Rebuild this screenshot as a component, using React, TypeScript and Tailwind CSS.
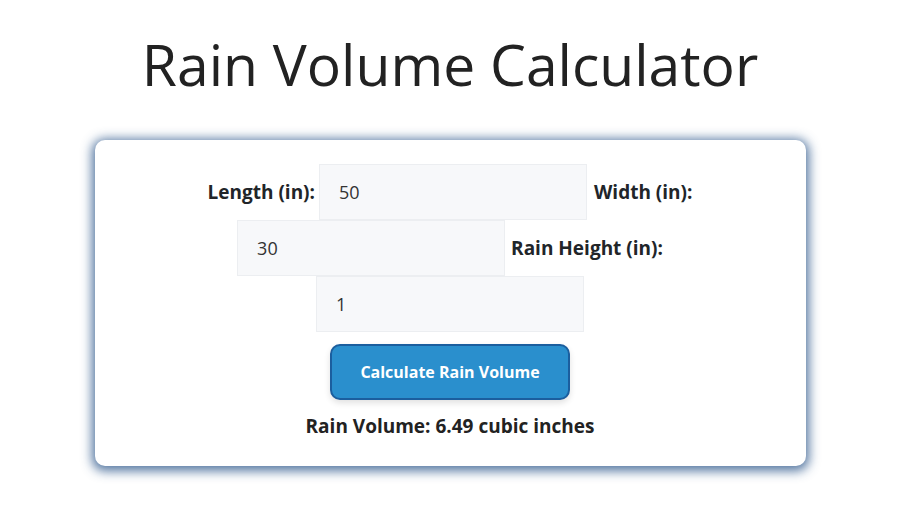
import React, { useState } from 'react';

const font = { fontFamily: '"Open Sans", "Noto Sans", sans-serif' };

const App: React.FC = () => {
  const [length, setLength] = useState('50');
  const [width, setWidth] = useState('30');
  const [height, setHeight] = useState('1');
  const [volume, setVolume] = useState('6.49');

  const calculate = () => {
    const v = (parseFloat(length) * parseFloat(width) * parseFloat(height)) / 231;
    setVolume(isNaN(v) ? '0.00' : v.toFixed(2));
  };

  const inputClass =
    'w-[268px] h-[56px] px-[19px] bg-[#f7f8fa] border border-[#eceef1] text-[18px] text-[#333] outline-none';

  return (
    <div className="min-h-screen bg-white text-[#212529] pr-[6px]" style={font}>
      <h1 className="pt-[34px] text-center text-[57px] leading-[60px] font-normal text-[#222]">
        Rain Volume Calculator
      </h1>

      {/* Calculator card */}
      <div className="w-[711px] mx-auto mt-[46px] bg-white rounded-[10px] shadow-[0_2px_11px_3px_rgba(55,95,145,0.85)] pt-[24px] pb-[26px]">
        <div className="flex justify-center items-center">
          <label className="text-[19px] font-bold mr-[4px]">Length (in):</label>
          <input className={inputClass} value={length} onChange={(e) => setLength(e.target.value)} />
          <label className="text-[19px] font-bold ml-[7px]">Width (in):</label>
        </div>
        <div className="flex justify-center items-center">
          <input className={inputClass} value={width} onChange={(e) => setWidth(e.target.value)} />
          <label className="text-[19px] font-bold ml-[6px]">Rain Height (in):</label>
        </div>
        <div className="flex justify-center items-center">
          <input className={inputClass} value={height} onChange={(e) => setHeight(e.target.value)} />
        </div>

        <div className="flex justify-center mt-[12px]">
          <button
            onClick={calculate}
            className="w-[240px] h-[56px] rounded-[10px] bg-[#2a8fcd] border-2 border-[#1b5e9e] text-white text-[16px] font-bold shadow-[0_3px_6px_rgba(0,0,0,0.12)]"
          >
            Calculate Rain Volume
          </button>
        </div>

        <p className="mt-[13px] text-center text-[19px] leading-[27px] font-bold text-[#222]">
          Rain Volume: {volume} cubic inches
        </p>
      </div>
    </div>
  );
};

export default App;
